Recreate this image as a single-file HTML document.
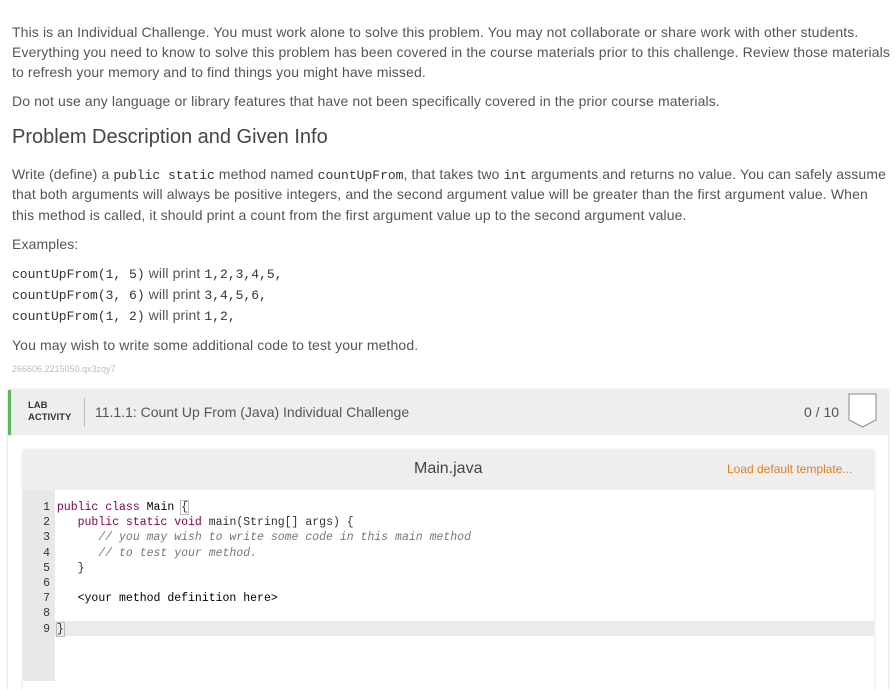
<!DOCTYPE html>
<html><head><style>
body{margin:0;width:896px;height:681px;overflow:hidden;background:#fff;font-family:"Liberation Sans",sans-serif;color:#555;font-size:14px;letter-spacing:0.12px}
.l{position:absolute;left:12px;white-space:nowrap;line-height:20px}
code,.m{font-family:"Liberation Mono",monospace;font-size:13px;letter-spacing:0;color:#333}
h2{position:absolute;left:12px;top:123px;margin:0;font-weight:normal;font-size:20px;color:#444;line-height:28px;letter-spacing:0}
</style></head><body>
<div class="l" style="top:22px">This is an Individual Challenge. You must work alone to solve this problem. You may not collaborate or share work with other students.</div>
<div class="l" style="top:42px">Everything you need to know to solve this problem has been covered in the course materials prior to this challenge. Review those materials</div>
<div class="l" style="top:62px">to refresh your memory and to find things you might have missed.</div>
<div class="l" style="top:91px">Do not use any language or library features that have not been specifically covered in the prior course materials.</div>
<h2>Problem Description and Given Info</h2>
<div class="l" style="top:164px">Write (define) a <code>public static</code> method named <code>countUpFrom</code>, that takes two <code>int</code> arguments and returns no value. You can safely assume</div>
<div class="l" style="top:184px">that both arguments will always be positive integers, and the second argument value will be greater than the first argument value. When</div>
<div class="l" style="top:205px">this method is called, it should print a count from the first argument value up to the second argument value.</div>
<div class="l" style="top:234px">Examples:</div>
<div class="l" style="top:263px"><code>countUpFrom(1, 5)</code> will print <code>1,2,3,4,5,</code></div>
<div class="l" style="top:284px"><code>countUpFrom(3, 6)</code> will print <code>3,4,5,6,</code></div>
<div class="l" style="top:305px"><code>countUpFrom(1, 2)</code> will print <code>1,2,</code></div>
<div class="l" style="top:335px">You may wish to write some additional code to test your method.</div>
<div class="l" style="top:359px;font-size:9px;color:#bbb;letter-spacing:0">266606.2215050.qx3zqy7</div>

<div style="position:absolute;left:8px;top:390px;width:880px;height:300px;background:#fff;box-shadow:0 0 3px rgba(0,0,0,.2)"></div>
<div style="position:absolute;left:8px;top:390px;width:877px;height:45px;background:#eee;border-left:3px solid #5cb85c"></div>
<div style="position:absolute;left:28px;top:400px;font-size:9.5px;font-weight:bold;color:#333;line-height:12px;letter-spacing:0">LAB<br>ACTIVITY</div>
<div style="position:absolute;left:84px;top:398px;width:1px;height:29px;background:#bbb"></div>
<div style="position:absolute;left:95px;top:404px;font-size:14px;color:#555;letter-spacing:0">11.1.1: Count Up From (Java) Individual Challenge</div>
<div style="position:absolute;left:804px;top:404px;font-size:14px;color:#555;letter-spacing:0">0 / 10</div>
<svg style="position:absolute;left:848px;top:393px" width="30" height="36"><path d="M1 1H28V27L14.5 34L1 27Z" fill="#fff" stroke="#888"/></svg>

<div style="position:absolute;left:23px;top:450px;width:851px;height:240px;background:#fff;box-shadow:0 0 3px rgba(0,0,0,.15)"></div>
<div style="position:absolute;left:23px;top:450px;width:851px;height:40px;background:#eee"></div>
<div style="position:absolute;left:414px;top:460px;font-size:16px;color:#444;letter-spacing:0">Main.java</div>
<div style="position:absolute;left:727px;top:462px;font-size:12px;color:#e67e22;letter-spacing:0">Load default template...</div>
<div style="position:absolute;left:23px;top:490px;width:32px;height:191px;background:#e8e8e8"></div>
<div style="position:absolute;left:55px;top:621px;width:819px;height:15px;background:#ebebeb"></div>
<pre style="position:absolute;left:26px;top:500px;margin:0;font-family:'Liberation Mono',monospace;font-size:11.5px;line-height:15.2px;color:#333;letter-spacing:0">
<span style="display:inline-block;width:24px;text-align:right">1</span> <span style="color:#7f0055">public class</span> <span style="color:#000">Main</span> <span style="outline:1px solid #bbb">{</span>
<span style="display:inline-block;width:24px;text-align:right">2</span>    <span style="color:#7f0055">public static void</span> main(String[] args) {
<span style="display:inline-block;width:24px;text-align:right">3</span>       <i style="color:#777">// you may wish to write some code in this main method</i>
<span style="display:inline-block;width:24px;text-align:right">4</span>       <i style="color:#777">// to test your method.</i>
<span style="display:inline-block;width:24px;text-align:right">5</span>    }
<span style="display:inline-block;width:24px;text-align:right">6</span>
<span style="display:inline-block;width:24px;text-align:right">7</span>    <span style="color:#000">&lt;your method definition here&gt;</span>
<span style="display:inline-block;width:24px;text-align:right">8</span>
<span style="display:inline-block;width:24px;text-align:right">9</span> <span style="outline:1px solid #bbb">}</span>
</pre>
</body></html>
